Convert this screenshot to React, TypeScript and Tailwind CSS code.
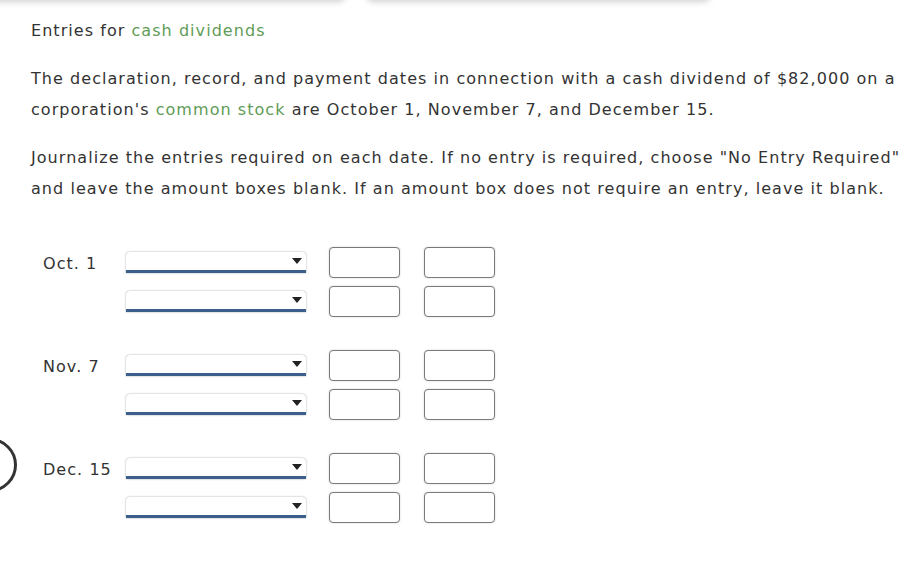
import React from "react";

const green = "text-[#5f9c57]";

function Select() {
  return (
    <div className="relative h-[21px] w-[180px] rounded-t-[4px] border-b-[3px] border-[#3b5f8a] bg-white shadow-[0_0_2px_rgba(0,0,0,0.4)]">
      <span className="absolute right-[4px] top-[6px] h-0 w-0 border-x-[5px] border-t-[6px] border-x-transparent border-t-[#222]" />
    </div>
  );
}

function Amount() {
  return <div className="h-[31px] w-[71px] rounded-[4px] border border-[#7a7a7a] bg-white shadow-[0_0_2px_rgba(0,0,0,0.2)]" />;
}

function EntryLine() {
  return (
    <div className="flex items-center">
      <Select />
      <div className="ml-[23px] flex gap-[24px]">
        <Amount />
        <Amount />
      </div>
    </div>
  );
}

function EntryGroup({ date }: { date: string }) {
  return (
    <div className="flex items-start">
      <div className="flex h-[31px] w-[83px] shrink-0 items-center pt-[2px]">{date}</div>
      <div className="flex flex-col gap-[8px]">
        <EntryLine />
        <EntryLine />
      </div>
    </div>
  );
}

export default function App() {
  return (
    <div
      className="relative h-[566px] w-[922px] overflow-hidden bg-white text-[16px] tracking-[1.05px] text-[#333]"
      style={{ fontFamily: '"DejaVu Sans", Verdana, sans-serif' }}
    >
      {/* cards above, only their shadows show */}
      <div className="absolute -top-[20px] left-[-10px] h-[20px] w-[355px] rounded-b-[6px] bg-white shadow-[0_2px_6px_rgba(0,0,0,0.18)]" />
      <div className="absolute -top-[20px] left-[367px] h-[20px] w-[343px] rounded-b-[6px] bg-white shadow-[0_2px_6px_rgba(0,0,0,0.18)]" />

      {/* partial circle on left edge */}
      <div className="absolute left-[-37px] top-[438px] h-[54px] w-[54px] rounded-full border-[3px] border-[#333]" />

      <div className="pl-[31px] pr-[20px] pt-[19px]">
        <p className="leading-[24px]">
          Entries for <span className={green}>cash dividends</span>
        </p>
        <p className="mt-[20px] leading-[31px]">
          The declaration, record, and payment dates in connection with a cash dividend of $82,000 on a corporation's{" "}
          <span className={green}>common stock</span> are October 1, November 7, and December 15.
        </p>
        <p className="mt-[17px] leading-[31px]">
          Journalize the entries required on each date. If no entry is required, choose "No Entry Required" and leave
          the amount boxes blank. If an amount box does not require an entry, leave it blank.
        </p>

        <div className="ml-[12px] mt-[43px] flex flex-col gap-[33px]">
          <EntryGroup date="Oct. 1" />
          <EntryGroup date="Nov. 7" />
          <EntryGroup date="Dec. 15" />
        </div>
      </div>
    </div>
  );
}
